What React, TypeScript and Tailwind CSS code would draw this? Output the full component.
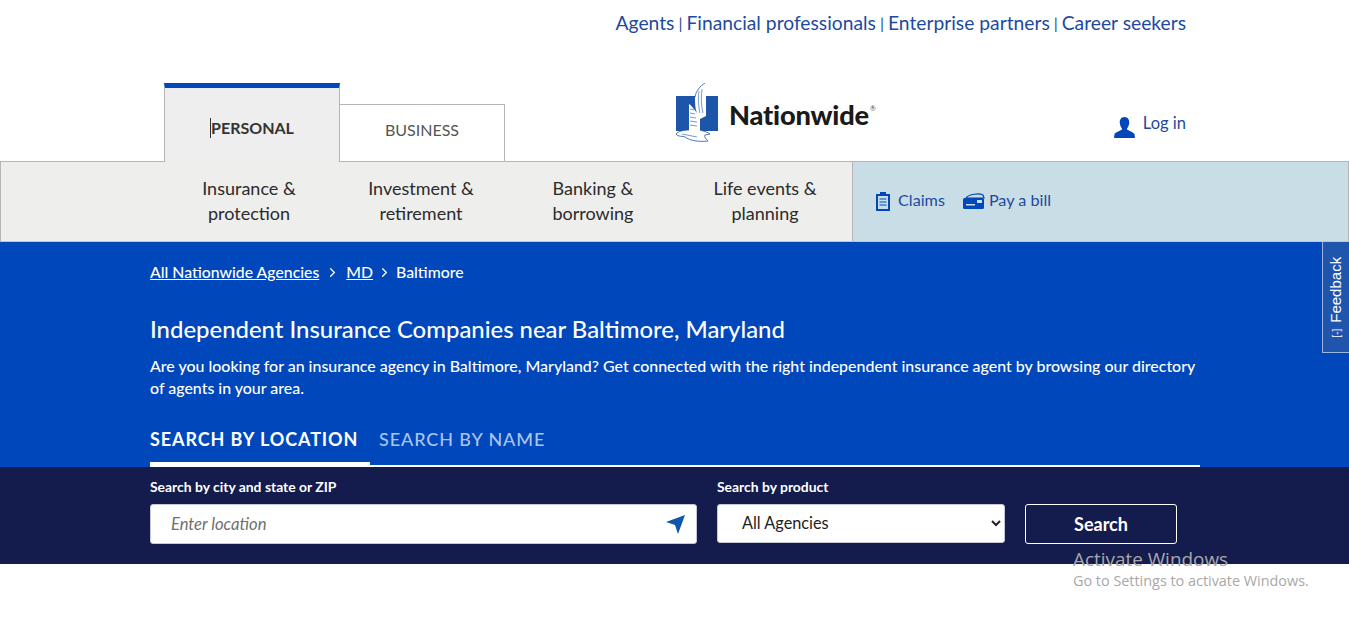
import { ChevronRight } from 'lucide-react';

const font = "font-['Lato','Open_Sans',sans-serif]";

const navItems = [
  ['Insurance &', 'protection'],
  ['Investment &', 'retirement'],
  ['Banking &', 'borrowing'],
  ['Life events &', 'planning'],
];

function Logo() {
  return (
    <svg width="46" height="60" viewBox="0 0 46 60" className="shrink-0">
      <rect x="1" y="13" width="42" height="35" fill="#1d55a8" />
      <path
        d="M30 0 C25 3 21 8 20 14 C20 20 20 26 22 30 C19 26 16 22 14 21 L14 47 C10 47 3 48 1 51 C3 54 8 53 10 54 C15 58 25 59 33 58 C31 56 29 54 30 52 L35 51 C33 49 28 48 25 47 L25 36 L31 33 L31 13 Z"
        fill="#fff"
      />
      <path
        d="M30 0 C25 3 21 8 20 14 M14 47 C10 47 3 48 1 51 C3 54 8 53 10 54 C15 58 25 59 33 58 C31 56 29 54 30 52 L35 51 C33 49 28 48 25 47"
        fill="none"
        stroke="#1d55a8"
        strokeWidth="0.8"
      />
      <path
        d="M24 8 C23 14 23 22 25 30 M27 6 C26 14 26 22 28 30 M15 26 L19 27 M15 30 L20 31 M15 34 L21 35 M15 38 L22 39 M15 42 L22 43 M7 51 L22 54"
        stroke="#1d55a8"
        strokeWidth="0.6"
        fill="none"
      />
    </svg>
  );
}

function ClaimsIcon() {
  return (
    <svg width="16" height="21" viewBox="0 0 16 21" className="shrink-0">
      <path d="M1 3h4V1h6v2h4v17H1z" fill="#0047bb" />
      <rect x="3" y="5" width="10" height="13" fill="#c9dde6" />
      <path d="M4.5 8h7M4.5 11h7M4.5 14h7" stroke="#0047bb" strokeWidth="1" />
    </svg>
  );
}

function BillIcon() {
  return (
    <svg width="22" height="17" viewBox="0 0 22 17" className="shrink-0">
      <path d="M3 5 C6 1 16 0 20 2 L21 5 Z" fill="none" stroke="#0047bb" strokeWidth="1.2" />
      <rect x="0" y="5" width="21" height="11" rx="1.5" fill="#0047bb" />
      <rect x="3" y="11" width="9" height="1.5" fill="#c9dde6" />
      <rect x="14" y="7" width="5" height="3" fill="#c9dde6" />
    </svg>
  );
}

function UserIcon() {
  return (
    <svg width="21" height="21" viewBox="0 0 21 21" className="shrink-0">
      <path d="M10.5 0 C14 0 15.5 3 15.2 6 C15 9 13.5 11 12.8 12 C13 13.5 19 14.5 20.5 17 L21 21 H0 L0.5 17 C2 14.5 8 13.5 8.2 12 C7.5 11 6 9 5.8 6 C5.5 3 7 0 10.5 0 Z" fill="#0047bb" />
    </svg>
  );
}

export default function App() {
  return (
    <div className={`relative h-[623px] w-full overflow-hidden bg-white ${font}`}>
      {/* Top links */}
      <div className="flex h-[83px] justify-end pr-[163px] pt-[11px] text-[19.25px] leading-6 text-[#1d4a9f]">
        <span>Agents</span>
        <span className="mx-[4px] text-[16px]">|</span>
        <span>Financial professionals</span>
        <span className="mx-[4px] text-[16px]">|</span>
        <span>Enterprise partners</span>
        <span className="mx-[4px] text-[16px]">|</span>
        <span>Career seekers</span>
      </div>

      {/* Header */}
      <div className="flex h-[78px] items-start">
        <div className="ml-[164px] flex h-[79px] items-end">
          <div className="z-10 flex h-[79px] w-[176px] items-center justify-center border-x border-t-[5px] border-x-[#b5b5b5] border-t-[#0047bb] bg-[#eeeeee] pt-[6px] text-[16px] font-bold text-[#333]">
            <span className="border-l border-[#333] leading-5">PERSONAL</span>
          </div>
          <div className="flex h-[58px] w-[165px] items-center justify-center border-r border-t border-[#b5b5b5] pb-[7px] text-[16px] text-[#555]">
            BUSINESS
          </div>
        </div>
        <div className="ml-[170px] flex items-center gap-[8px]">
          <Logo />
          <span className="mt-[3px] text-[27.2px] font-black leading-none tracking-[-0.2px] text-[#1a1a1a]">Nationwide</span>
          <span className="mb-[10px] ml-[-7px] text-[7px] text-[#555]">®</span>
        </div>
        <div className="ml-auto mr-[163px] mt-[28px] flex items-center gap-[8px] text-[16.5px] text-[#1d4a9f]">
          <UserIcon />
          <span className="mb-[8px]">Log in</span>
        </div>
      </div>

      {/* Main nav */}
      <div className="flex h-[81px] border border-[#b5b5b5] border-b-[#c5c5c5] bg-[#eeeeec]">
        <div className="ml-[162px] flex w-[688px]">
          {navItems.map((item) => (
            <div key={item[0]} className="w-[172px] pt-[14px] text-center text-[18px] leading-[25px] text-[#2b2b2b]">
              <div>{item[0]}</div>
              <div>{item[1]}</div>
            </div>
          ))}
        </div>
        <div className="ml-[1px] flex flex-1 items-center gap-[18px] border-l border-[#b5b5b5] bg-[#c9dde6] pl-[22px] text-[16.2px] text-[#1d4a9f]">
          <div className="flex items-center gap-[7px]">
            <ClaimsIcon />
            <span className="mb-[3px]">Claims</span>
          </div>
          <div className="flex items-center gap-[4px]">
            <BillIcon />
            <span className="mb-[3px]">Pay a bill</span>
          </div>
        </div>
      </div>

      {/* Blue hero */}
      <div className="h-[225px] bg-[#0047bb] pl-[150px] text-white">
        <div className="w-[1050px]">
          <div className="flex items-center pt-[20px] text-[15.8px] font-medium leading-5">
            <span className="underline">All Nationwide Agencies</span>
            <ChevronRight size={15} className="mx-[6px]" />
            <span className="underline">MD</span>
            <ChevronRight size={15} className="mx-[4px]" />
            <span>Baltimore</span>
          </div>
          <h1 className="mt-[31px] text-[23.9px] font-medium leading-8">Independent Insurance Companies near Baltimore, Maryland</h1>
          <p className="mt-[10px] text-[15.95px] font-medium leading-[22px]">
            Are you looking for an insurance agency in Baltimore, Maryland? Get connected with the right independent insurance agent by browsing our directory of agents in your area.
          </p>
          <div className="mt-[27px] flex h-[41px] border-b-2 border-white text-[18px] font-bold tracking-[0.9px]">
            <div className="h-[41px] w-[220px] border-b-[5px] border-white leading-[27px]">SEARCH BY LOCATION</div>
            <div className="ml-[9px] font-medium leading-[27px] text-[#a9c4ee]">SEARCH BY NAME</div>
          </div>
        </div>
      </div>

      {/* Search bar */}
      <div className="flex h-[97px] gap-[20px] bg-[#141b4d] pl-[150px] text-white">
        <div className="w-[547px]">
          <div className="pt-[11px] text-[13.9px] font-bold leading-[18px]">Search by city and state or ZIP</div>
          <div className="mt-[8px] flex h-[40px] items-center justify-between rounded-[3px] border border-[#c5c9d6] bg-white pl-[20px] pr-[11px]">
            <span className="text-[16.6px] italic text-[#6f6f6f]">Enter location</span>
            <svg width="19" height="19" viewBox="0 0 19 19">
              <path d="M19 0 L12 19 L9 10 L0 7 Z" fill="#0f57ae" />
            </svg>
          </div>
        </div>
        <div className="w-[288px]">
          <div className="pt-[11px] text-[13.9px] font-bold leading-[18px]">Search by product</div>
          <select className="mt-[8px] h-[39px] w-full rounded-[3px] border border-[#c5c9d6] bg-white pb-[2px] pl-[20px] text-[16.3px] text-[#222]" defaultValue="All Agencies">
            <option>All Agencies</option>
          </select>
        </div>
        <button className="mt-[37px] h-[40px] w-[152px] rounded-[3px] border border-white text-[18px] font-bold">Search</button>
      </div>

      {/* Feedback tab */}
      <div className="absolute right-0 top-[242px] flex h-[111px] w-[27px] items-center justify-center border-b border-l border-[#9db6dd] bg-[#1f55ad] text-white">
        <div className="flex rotate-[-90deg] items-center gap-[6px] whitespace-nowrap font-['Liberation_Sans',sans-serif] text-[15px]">
          <span className="text-[10px]">[-]</span>
          <span>Feedback</span>
        </div>
      </div>

      {/* Activate Windows watermark */}
      <div className="absolute left-[1073px] top-[547px] font-['Open_Sans',sans-serif] text-[#a8a8a8]">
        <div className="text-[18.9px] leading-6">Activate Windows</div>
        <div className="text-[14.4px] leading-5">Go to Settings to activate Windows.</div>
      </div>
    </div>
  );
}
